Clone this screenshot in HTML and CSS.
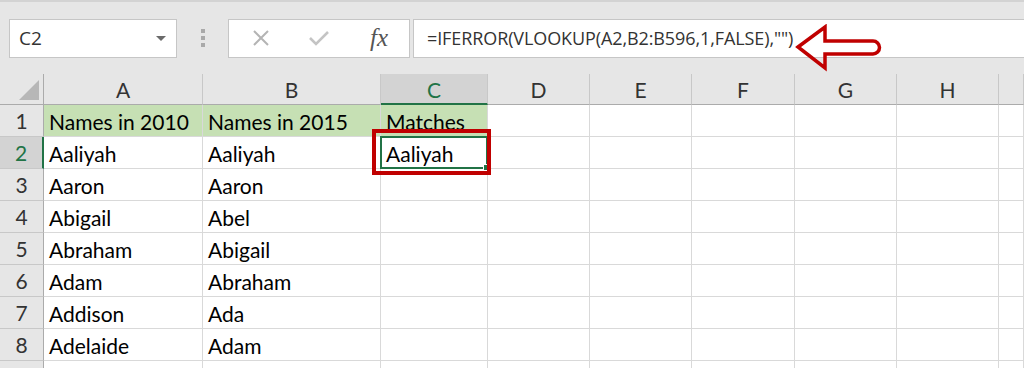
FILE: index.html
```html
<!doctype html>
<html lang="en">
  <head>
    <meta charset="UTF-8" />
    <meta name="viewport" content="width=device-width, initial-scale=1.0" />
    <title>VLOOKUP matches</title>
    <link rel="stylesheet" href="styles.css">
  </head>
  <body>
    <div class="app">
      <div class="formula-bar">
        <div class="name-box">
          <span>C2</span>
          <span class="caret"></span>
        </div>

        <div class="grip">
          <span></span><span></span><span></span>
        </div>

        <div class="fx-buttons">
          <svg class="fx-icon" width="18" height="18" viewBox="0 0 18 18">
            <path d="M2 2 L16 16 M16 2 L2 16" stroke="#b4b4b4" stroke-width="2" fill="none" />
          </svg>
          <svg class="fx-icon" width="22" height="18" viewBox="0 0 22 18">
            <path d="M2 9 L8 15 L20 3" stroke="#c4c4c4" stroke-width="2.6" fill="none" />
          </svg>
          <span class="fx-label">fx</span>
        </div>

        <div class="formula-input">
          <span>=IFERROR(VLOOKUP(A2,B2:B596,1,FALSE),"")</span>
          <!-- red callout arrow pointing at the formula -->
          <svg class="callout" width="90" height="50" viewBox="0 0 90 50">
            <path d="M3 23 L30 3 L30 17 L78 17 A6.5 6.5 0 0 1 78 30 L30 30 L30 44 Z"
                  stroke="#c00000" stroke-width="3.5" fill="none" stroke-linejoin="miter" />
          </svg>
        </div>
      </div>

      <div class="sheet">
        <div class="corner"><span class="corner-tri"></span></div>
        <div class="col-head">A</div>
        <div class="col-head">B</div>
        <div class="col-head active">C</div>
        <div class="col-head">D</div>
        <div class="col-head">E</div>
        <div class="col-head">F</div>
        <div class="col-head">G</div>
        <div class="col-head">H</div>
        <div class="col-head"></div>

        <div class="row-head">1</div>
        <div class="cell fill">Names in 2010</div>
        <div class="cell fill">Names in 2015</div>
        <div class="cell fill">Matches</div>
        <div class="cell"></div><div class="cell"></div><div class="cell"></div>
        <div class="cell"></div><div class="cell"></div><div class="cell"></div>

        <div class="row-head active">2</div>
        <div class="cell">Aaliyah</div>
        <div class="cell">Aaliyah</div>
        <div class="cell selected">
          Aaliyah
          <span class="sel-border"><span class="handle"></span></span>
          <span class="highlight"></span>
        </div>
        <div class="cell"></div><div class="cell"></div><div class="cell"></div>
        <div class="cell"></div><div class="cell"></div><div class="cell"></div>

        <div class="row-head">3</div>
        <div class="cell">Aaron</div>
        <div class="cell">Aaron</div>
        <div class="cell"></div><div class="cell"></div><div class="cell"></div>
        <div class="cell"></div><div class="cell"></div><div class="cell"></div><div class="cell"></div>

        <div class="row-head">4</div>
        <div class="cell">Abigail</div>
        <div class="cell">Abel</div>
        <div class="cell"></div><div class="cell"></div><div class="cell"></div>
        <div class="cell"></div><div class="cell"></div><div class="cell"></div><div class="cell"></div>

        <div class="row-head">5</div>
        <div class="cell">Abraham</div>
        <div class="cell">Abigail</div>
        <div class="cell"></div><div class="cell"></div><div class="cell"></div>
        <div class="cell"></div><div class="cell"></div><div class="cell"></div><div class="cell"></div>

        <div class="row-head">6</div>
        <div class="cell">Adam</div>
        <div class="cell">Abraham</div>
        <div class="cell"></div><div class="cell"></div><div class="cell"></div>
        <div class="cell"></div><div class="cell"></div><div class="cell"></div><div class="cell"></div>

        <div class="row-head">7</div>
        <div class="cell">Addison</div>
        <div class="cell">Ada</div>
        <div class="cell"></div><div class="cell"></div><div class="cell"></div>
        <div class="cell"></div><div class="cell"></div><div class="cell"></div><div class="cell"></div>

        <div class="row-head">8</div>
        <div class="cell">Adelaide</div>
        <div class="cell">Adam</div>
        <div class="cell"></div><div class="cell"></div><div class="cell"></div>
        <div class="cell"></div><div class="cell"></div><div class="cell"></div><div class="cell"></div>

        <div class="row-head"></div>
        <div class="cell"></div><div class="cell"></div><div class="cell"></div>
        <div class="cell"></div><div class="cell"></div><div class="cell"></div>
        <div class="cell"></div><div class="cell"></div><div class="cell"></div>
      </div>
    </div>
  </body>
</html>
```

FILE: styles.css
```css
body {
  margin: 0;
  font-family: 'Lato', 'Open Sans', sans-serif;
  background: #e6e6e6;
  overflow: hidden;
}

.app {
  width: 1024px;
  height: 368px;
  overflow: hidden;
}

/* formula bar */

.formula-bar {
  display: flex;
  align-items: center;
  height: 74px;
  box-sizing: border-box;
  padding: 0 0 0 9px;
  border-top: 2px solid #d3d3d3;
}

.name-box {
  display: flex;
  align-items: center;
  justify-content: space-between;
  width: 168px;
  height: 39px;
  box-sizing: border-box;
  padding: 0 10px 0 9px;
  background: #fff;
  border: 1px solid #c6c6c6;
  font-family: 'Open Sans', sans-serif;
  font-size: 19px;
  color: #333;
}

.caret {
  width: 0;
  height: 0;
  border-left: 5px solid transparent;
  border-right: 5px solid transparent;
  border-top: 5px solid #6a6a6a;
}

.grip {
  display: flex;
  flex-direction: column;
  align-items: center;
  gap: 3px;
  width: 51px;
}

.grip span {
  width: 4px;
  height: 4px;
  background: #a9a9a9;
}

.fx-buttons {
  display: flex;
  align-items: center;
  width: 182px;
  height: 39px;
  box-sizing: border-box;
  padding: 0 0 0 23px;
  background: #fff;
  border: 1px solid #c6c6c6;
}

.fx-icon {
  margin-right: 38px;
}

.fx-label {
  margin-left: 2px;
  font-family: 'Liberation Serif', serif;
  font-style: italic;
  font-size: 25px;
  color: #555;
}

.formula-input {
  position: relative;
  flex: 1;
  display: flex;
  align-items: center;
  height: 39px;
  margin-left: 3px;
  box-sizing: border-box;
  padding-left: 13px;
  background: #fff;
  border: 1px solid #c6c6c6;
  border-right: none;
  font-family: 'Open Sans', sans-serif;
  font-size: 18px;
  letter-spacing: -0.1px;
  color: #333;
}

.callout {
  position: absolute;
  left: 381px;
  top: 4px;
}

/* grid */

.sheet {
  display: grid;
  grid-template-columns: 44px 159px 178px 107px 102px 102px 103px 102px 102px 1fr;
  grid-template-rows: 31px repeat(9, 32px);
  font-size: 21px;
  background: #fff;
}

.corner,
.col-head,
.row-head {
  background: #e6e6e6;
  color: #333;
  box-sizing: border-box;
  display: flex;
  align-items: center;
  justify-content: center;
}

.corner {
  position: relative;
  border-right: 1px solid #ababab;
  border-bottom: 1px solid #ababab;
}

.corner-tri {
  position: absolute;
  right: 4px;
  bottom: 4px;
  width: 0;
  height: 0;
  border-left: 20px solid transparent;
  border-bottom: 20px solid #b7b7b7;
}

.col-head {
  border-right: 1px solid #c8c8c8;
  border-bottom: 1px solid #ababab;
  padding-top: 1px;
}

.col-head.active {
  background: #d3d3d3;
  color: #217346;
  border-bottom: 2px solid #217346;
}

.row-head {
  border-right: 1px solid #ababab;
  border-bottom: 1px solid #c8c8c8;
}

.row-head.active {
  background: #d3d3d3;
  color: #217346;
  border-right: 2px solid #217346;
}

.cell {
  display: flex;
  align-items: center;
  box-sizing: border-box;
  padding: 2px 0 0 5px;
  border-right: 1px solid #d9d9d9;
  border-bottom: 1px solid #d9d9d9;
  color: #000;
  white-space: nowrap;
}

.cell.fill {
  background: #c6e0b4;
}

.cell.selected {
  position: relative;
}

.sel-border {
  position: absolute;
  left: -1px;
  top: -1px;
  right: -1px;
  bottom: -1px;
  border: 2px solid #217346;
}

.handle {
  position: absolute;
  right: -4px;
  bottom: -4px;
  width: 5px;
  height: 5px;
  background: #217346;
  border: 1px solid #fff;
}

.highlight {
  position: absolute;
  left: -9px;
  top: -8px;
  right: -4px;
  bottom: -7px;
  border: 4px solid #c00000;
}
```
